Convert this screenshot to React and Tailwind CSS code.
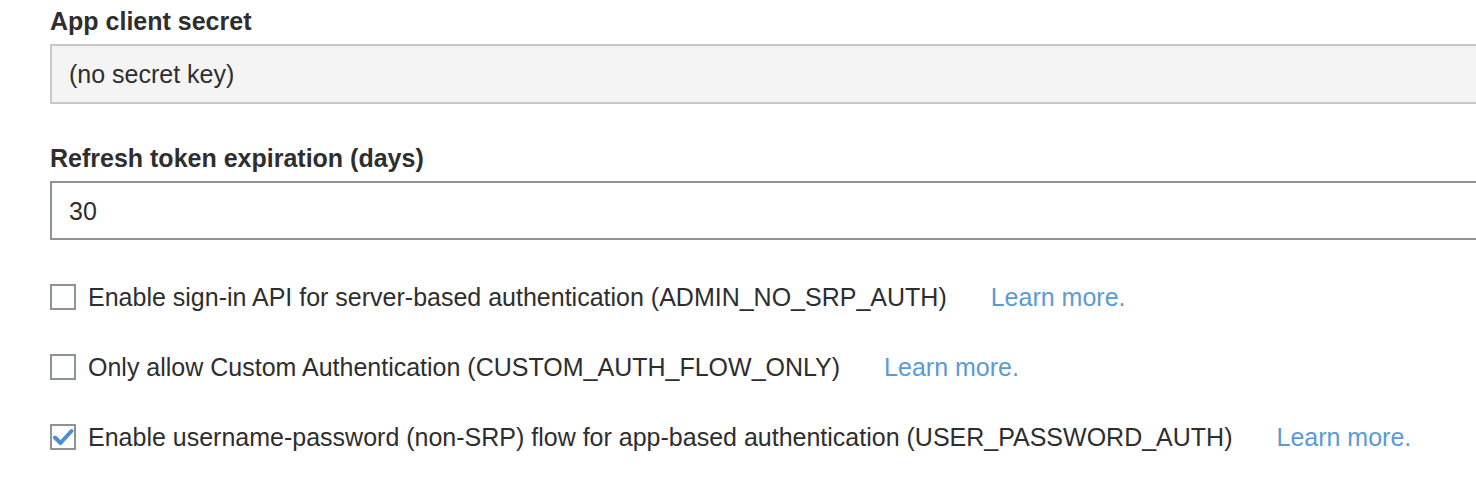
import React from 'react';

function Check({ checked }) {
    return (
        <span className="flex h-[26px] w-[26px] shrink-0 items-center justify-center border-2 border-[#8e9396] bg-white">
            {checked && (
                <svg width="22" height="22" viewBox="0 0 22 22">
                    <path d="M3 11.5 L8.5 17 L19.5 5" fill="none" stroke="#4a8fd6" strokeWidth="4" strokeLinecap="round" strokeLinejoin="round" />
                </svg>
            )}
        </span>
    );
}

function Option({ label, checked }) {
    return (
        <div className="flex h-[26px] items-center">
            <Check checked={checked} />
            <span className="ml-[12px] whitespace-nowrap">{label}</span>
            <a href="#" className="ml-[44px] whitespace-nowrap text-[#5b9bd5]">Learn more.</a>
        </div>
    );
}

export default function App() {
    return (
        <div className="h-[502px] w-[1476px] overflow-hidden bg-white pl-[50px] pt-[7px] text-[25px] leading-[28px] text-[#2e2e2e]" style={{ fontFamily: '"Liberation Sans", Arial, sans-serif' }}>
            {/* App client secret */}
            <div className="font-bold">App client secret</div>
            <div className="mt-[9px] flex h-[60px] w-[1450px] items-center border-2 border-[#c8c8c8] bg-[#f4f4f4] px-[17px]">
                (no secret key)
            </div>

            {/* Refresh token */}
            <div className="mt-[40px] font-bold">Refresh token expiration (days)</div>
            <div className="mt-[9px] flex h-[59px] w-[1450px] items-center border-2 border-[#8e9396] bg-white px-[17px]">
                30
            </div>

            {/* Auth flows */}
            <div className="mt-[44px] flex flex-col gap-[44px]">
                <Option label="Enable sign-in API for server-based authentication (ADMIN_NO_SRP_AUTH)" />
                <Option label="Only allow Custom Authentication (CUSTOM_AUTH_FLOW_ONLY)" />
                <Option label="Enable username-password (non-SRP) flow for app-based authentication (USER_PASSWORD_AUTH)" checked />
            </div>
        </div>
    );
}
